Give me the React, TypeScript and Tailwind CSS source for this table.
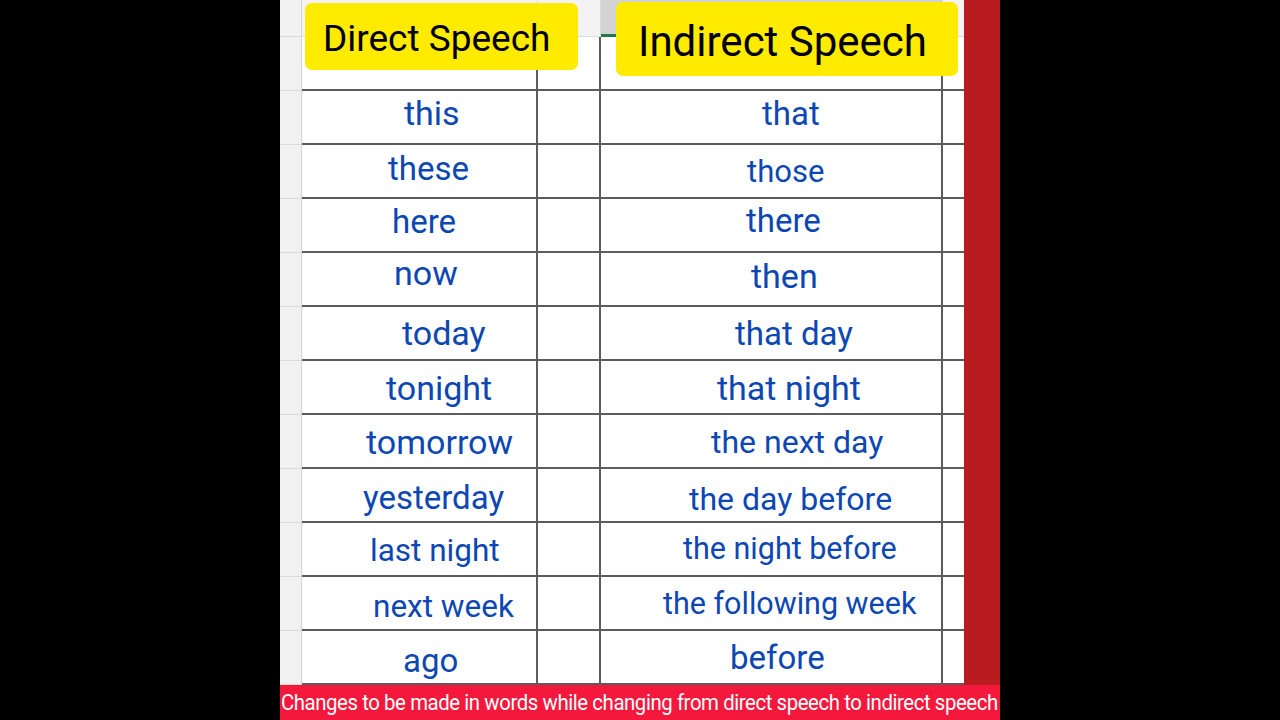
const rows = [
  { a: "this", aCls: "pl-[102px] pb-[8px] text-[34px]", c: "that", cCls: "pl-[161px] pb-[8px] text-[33px]" },
  { a: "these", aCls: "pl-[86px] pb-[6px] text-[33px]", c: "those", cCls: "pl-[146px] text-[31px]" },
  { a: "here", aCls: "pl-[90px] pb-[8px] text-[33px]", c: "there", cCls: "pl-[145px] pb-[10px] text-[33px]" },
  { a: "now", aCls: "pl-[92px] pb-[12px] text-[34px]", c: "then", cCls: "pl-[150px] pb-[6px] text-[34px]" },
  { a: "today", aCls: "pl-[100px] text-[34px]", c: "that day", cCls: "pl-[134px] text-[33px]" },
  { a: "tonight", aCls: "pl-[84px] pt-[2px] text-[34px]", c: "that night", cCls: "pl-[116px] pt-[2px] text-[34px]" },
  { a: "tomorrow", aCls: "pl-[64px] pt-[2px] text-[34px]", c: "the next day", cCls: "pl-[110px] pt-[2px] text-[32px]" },
  { a: "yesterday", aCls: "pl-[61px] pt-[4px] text-[33px]", c: "the day before", cCls: "pl-[88px] pt-[8px] text-[32px]" },
  { a: "last night", aCls: "pl-[68px] pt-[4px] text-[31.5px]", c: "the night before", cCls: "pl-[82px] text-[30.5px]" },
  { a: "next week", aCls: "pl-[71px] pt-[8px] text-[31.5px]", c: "the following week", cCls: "pl-[62px] pt-[2px] text-[30.5px]" },
  { a: "ago", aCls: "pl-[101px] pt-[6px] text-[33px]", c: "before", cCls: "pl-[129px] text-[33px]" },
];

function Gutter() {
  return (
    <div className="w-[22px] shrink-0 bg-[#f1f1f1] border-r border-[#d4d4d4] flex flex-col">
      <div className="h-[37px] border-b border-[#dadada]" />
      {Array.from({ length: 12 }).map((_, i) => (
        <div key={i} className="h-[54px] border-b border-[#dadada]" />
      ))}
    </div>
  );
}

export default function App() {
  return (
    <div className="min-h-screen bg-black flex justify-center">
      <div className="relative w-[720px] h-[720px] overflow-hidden bg-white flex font-['Roboto',sans-serif]">
        <Gutter />

        <div className="w-[662px] flex flex-col">
          {/* column header strip */}
          <div className="h-[37px] flex">
            <div className="w-[236px] bg-[#f3f3f3] border-b border-r border-[#dcdcdc]" />
            <div className="w-[63px] bg-[#f3f3f3] border-b border-r border-[#dcdcdc]" />
            <div className="w-[342px] bg-[#d3d3d3] border-b-[3px] border-[#1e7a4a]" />
            <div className="flex-1 bg-[#f3f3f3] border-b border-[#dcdcdc]" />
          </div>

          {/* title row, covered by the yellow labels */}
          <div className="h-[54px] flex border-b-2 border-[#5c5c5c]">
            <div className="w-[236px] border-r-2 border-[#5c5c5c]" />
            <div className="w-[63px] border-r-2 border-[#5c5c5c]" />
            <div className="w-[342px] border-r-2 border-[#5c5c5c]" />
            <div className="flex-1" />
          </div>

          {rows.map((r) => (
            <div key={r.a} className="h-[54px] shrink-0 flex border-b-2 border-[#5c5c5c] text-[#0c47b3]">
              <div className={"w-[236px] border-r-2 border-[#5c5c5c] flex items-center whitespace-nowrap leading-none " + r.aCls}>
                {r.a}
              </div>
              <div className="w-[63px] border-r-2 border-[#5c5c5c]" />
              <div className={"w-[342px] border-r-2 border-[#5c5c5c] flex items-center whitespace-nowrap leading-none " + r.cCls}>
                {r.c}
              </div>
              <div className="flex-1" />
            </div>
          ))}
        </div>

        <div className="w-[36px] shrink-0 bg-[#b81c1f]" />

        {/* yellow column labels */}
        <div className="absolute left-[25px] top-[3px] w-[273px] h-[67px] rounded-[7px] bg-[#ffeb00] flex items-center pl-[18px] pt-[4px] text-[37px] text-black leading-none">
          Direct Speech
        </div>
        <div className="absolute left-[336px] top-[2px] w-[342px] h-[74px] rounded-[7px] bg-[#ffeb00] flex items-center pl-[22px] pt-[6px] text-[42px] text-black leading-none">
          Indirect Speech
        </div>

        {/* caption bar */}
        <div className="absolute left-0 bottom-0 w-[720px] h-[35px] bg-[#f3183c] flex items-center overflow-hidden">
          <span className="pl-[1px] text-[22px] text-white whitespace-nowrap leading-none tracking-[-0.02em] origin-left scale-x-[0.925]">
            Changes to be made in words while changing from direct speech to indirect speech
          </span>
        </div>
      </div>
    </div>
  );
}
